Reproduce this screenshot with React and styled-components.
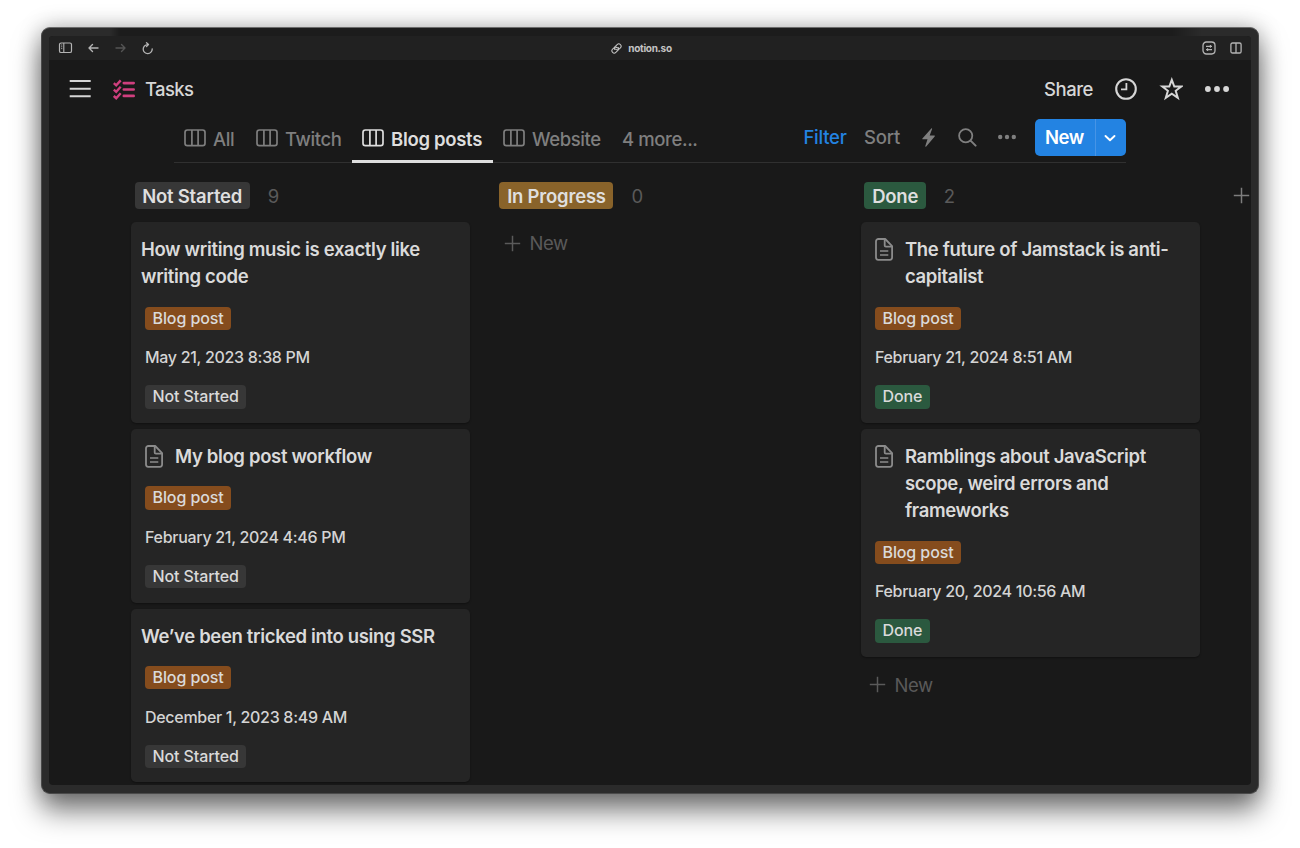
import styled, { createGlobalStyle, css } from 'styled-components'

const GlobalStyle = createGlobalStyle`
	* {
		box-sizing: border-box;
	}

	body {
		margin: 0;
		background: #fff;
		font-family: Inter, 'Liberation Sans', sans-serif;
		color: #d6d6d6;
		overflow: hidden;
	}
`

const Page = styled.div`
	width: 1300px;
	height: 848px;
	padding: 27px 41px 54px;
	overflow: hidden;
`

const Window = styled.div`
	height: 767px;
	border: 1px solid #4a4a4a;
	border-top-color: #6b6b6b;
	border-radius: 9px;
	padding: 8px 7px;
	background: linear-gradient(90deg, #2b2b2b 68px, #1c1c1c 78px, #1c1c1c 1130px, #2b2b2b 1160px)
			top / 100% 10px no-repeat,
		#2b2b2b;
	box-shadow: 0 17px 28px rgba(0, 0, 0, 0.5), 0 0 22px rgba(0, 0, 0, 0.28);
`

const Screen = styled.div`
	height: 749px;
	border-radius: 4px;
	background: #191919;
	overflow: hidden;
`

const BrowserBar = styled.div`
	height: 24px;
	padding: 0 9.5px 0 8.5px;
	display: grid;
	grid-template-columns: 1fr auto 1fr;
	align-items: center;
	background: #212121;
	color: #b4b4b4;

	svg {
		display: block;
	}
`

const BarSide = styled.div`
	display: flex;
	align-items: center;
	justify-content: ${({ $end }) => ($end ? 'flex-end' : 'flex-start')};
	gap: 14px;
`

const Address = styled.div`
	display: flex;
	align-items: center;
	gap: 6px;
	margin-right: 16px;
	color: #c4c4c4;
	font-size: 10px;
	font-weight: 700;
	letter-spacing: -0.3px;
`

const Header = styled.header`
	height: 58px;
	padding: 0 22px 0 20px;
	display: flex;
	align-items: center;
	font-size: 18.5px;
	font-weight: 500;

	svg {
		display: block;
	}
`

const Title = styled.div`
	margin: 0 auto 0 22px;
	display: flex;
	align-items: center;
	gap: 10px;
	letter-spacing: -0.65px;
`

const HeaderActions = styled.div`
	display: flex;
	align-items: center;
	gap: 22px;
	letter-spacing: -0.45px;
`

const Toolbar = styled.div`
	height: 45px;
	margin: 0 125px;
	display: flex;
	justify-content: space-between;
	border-bottom: 1px solid #303030;
	font-size: 18.5px;
	font-weight: 500;
	color: #7f7f7f;
`

const Tabs = styled.nav`
	display: grid;
	grid-template-columns: 72px 106px 141px 119px auto;
`

const Tab = styled.div`
	height: 45px;
	padding: 0 0 3px 10px;
	display: flex;
	align-items: center;
	gap: 7px;
	white-space: nowrap;
	letter-spacing: -0.4px;
	border-bottom: 3px solid transparent;

	span {
		padding-top: 2px;
	}

	${({ $active }) =>
		$active &&
		css`
			color: #dedede;
			font-weight: 600;
			letter-spacing: -0.3px;
			border-bottom-color: #dedede;
		`}
`

const Tools = styled.div`
	height: 37px;
	margin-top: 1px;
	display: flex;
	align-items: center;
	letter-spacing: -0.25px;

	svg {
		display: block;
	}
`

const Tool = styled.span`
	margin-right: ${({ $gap }) => $gap}px;
	padding-bottom: 1px;
	color: ${({ $accent }) => ($accent ? '#2383e2' : 'inherit')};
`

const NewButton = styled.div`
	width: 91px;
	height: 37px;
	display: grid;
	grid-template-columns: 60px 1fr;
	border-radius: 5px;
	background: #2383e2;
	color: #fff;
	font-weight: 600;
	letter-spacing: -0.4px;

	> * {
		display: flex;
		align-items: center;
		justify-content: center;
		padding: 0 1px 1px 0;
	}

	> :last-child {
		padding: 1px 2px 0 0;
		border-left: 1px solid #4694e6;
	}
`

const Board = styled.main`
	padding: 19.4px 0 0 82px;
	display: flex;
	gap: 26.3px;
`

const Column = styled.section`
	width: 338.7px;
	flex: none;
`

const ColumnHeader = styled.div`
	height: 40px;
	padding-left: 3.5px;
	display: flex;
	align-items: flex-start;
	font-size: 18.5px;
`

const tones = {
	gray: '#373737',
	yellow: '#89632a',
	green: '#2b593f',
	orange: '#854c1d',
}

const StatusTag = styled.span`
	height: 27px;
	padding: 0 7.7px;
	border-radius: 4px;
	line-height: 28px;
	font-weight: 600;
	letter-spacing: -0.22px;
	color: #dfdfdf;
	background: ${({ $tone }) => tones[$tone]};
`

const Count = styled.span`
	margin-left: 18px;
	line-height: 29px;
	color: #5a5a5a;
`

const AddColumn = styled.div`
	margin: 5px 0 0 7px;
	color: #7d7d7d;

	svg {
		display: block;
	}
`

const Cards = styled.div`
	display: flex;
	flex-direction: column;
	gap: 6.5px;
`

const CardBox = styled.article`
	padding: 13.4px 14px 6.4px;
	border-radius: 5px;
	background: #252525;
	box-shadow: 0 1px 2px rgba(0, 0, 0, 0.35);
`

const CardTitle = styled.h3`
	margin: 0 0 8.4px ${({ $page }) => ($page ? 0 : -4)}px;
	display: flex;
	gap: 12px;
	font-size: 18.5px;
	font-weight: 580;
	line-height: 27.2px;
	letter-spacing: -0.34px;
	color: #dadada;

	svg {
		flex: none;
		margin-top: 2px;
	}
`

const Property = styled.div`
	height: 39.3px;
	display: flex;
	align-items: center;
	font-size: 16px;
	font-weight: 480;
	letter-spacing: -0.3px;
	color: #d4d4d4;
`

const DateText = styled.span`
	padding-bottom: 1px;
`

const Tag = styled.span`
	height: 23.4px;
	padding: 0 7.5px;
	border-radius: 4px;
	line-height: 23.4px;
	font-weight: 500;
	letter-spacing: -0.1px;
	color: #dadada;
	background: ${({ $tone }) => tones[$tone]};
`

const AddCard = styled.div`
	height: 42px;
	padding-left: 8px;
	display: flex;
	align-items: center;
	gap: 8.5px;
	font-size: 18.5px;
	letter-spacing: -0.4px;
	color: #5a5a5a;
`

const SidebarIcon = () => (
	<svg width='15' height='12' viewBox='0 0 15 12' fill='none' stroke='currentColor'>
		<rect x='1.5' y='1' width='12' height='9.5' rx='1.6' strokeWidth='1.2' />
		<path d='M5.8 1v9.5' strokeWidth='1.1' />
		<path d='M3 3h1.3M3 4.8h1.3M3 6.6h1.3' strokeWidth='.8' />
	</svg>
)

const ArrowIcon = ({ forward }) => (
	<svg
		width='13'
		height='12'
		viewBox='0 0 13 12'
		fill='none'
		stroke={forward ? '#545454' : 'currentColor'}
		strokeWidth='1.4'
		strokeLinecap='round'
		strokeLinejoin='round'
	>
		<path d={forward ? 'M2 6h9M7.5 2.5 11 6 7.5 9.5' : 'M11 6H2M5.5 2.5 2 6l3.5 3.5'} />
	</svg>
)

const ReloadIcon = () => (
	<svg width='13' height='13' viewBox='0 0 13 13' fill='none' stroke='currentColor' strokeWidth='1.3' strokeLinecap='round' strokeLinejoin='round'>
		<path d='M11.2 6.9a4.5 4.5 0 1 1-4.5-4.3M5.5.8l2 1.8-2 2' />
	</svg>
)

const LinkIcon = () => (
	<svg width='11' height='11' viewBox='0 0 24 24' fill='none' stroke='currentColor' strokeWidth='2.3' strokeLinecap='round'>
		<path d='M10 13a5 5 0 0 0 7.54.54l3-3a5 5 0 0 0-7.07-7.07l-4.5 4.5a5 5 0 0 0-.7 6.2' />
		<path d='M14 11a5 5 0 0 0-7.54-.54l-3 3a5 5 0 0 0 7.07 7.07l4.5-4.5a5 5 0 0 0 .7-6.2' />
	</svg>
)

const ReaderIcon = () => (
	<svg width='14' height='14' viewBox='0 0 14 14' fill='none' stroke='currentColor'>
		<rect x='1' y='1' width='12' height='12' rx='3.4' strokeWidth='1.3' />
		<path d='M4 5.4h6M4 8.6h6M8.4 4v2.8M5.6 7.2V10' strokeWidth='1.1' />
	</svg>
)

const SplitIcon = () => (
	<svg width='12' height='12' viewBox='0 0 12 12' fill='none' stroke='currentColor' strokeWidth='1.3'>
		<rect x='.9' y='1' width='10.2' height='10' rx='1.6' />
		<path d='M6 1v10' />
	</svg>
)

const MenuIcon = () => (
	<svg width='22' height='20' viewBox='0 0 22 20' fill='none' stroke='currentColor' strokeWidth='2'>
		<path d='M.7 2.1h21M.7 9.7h21M.7 17.3h21' />
	</svg>
)

const ChecklistIcon = () => (
	<svg width='22' height='21' viewBox='0 0 22 21' fill='none' stroke='#cf3f7e'>
		<path d='M.8 4.2l2.4 2.2 4.5-5M.8 10.6l2.4 2.2 4.5-5M.8 17l2.4 2.2 4.5-5' strokeWidth='2.4' />
		<path d='M10.8 4.1h9.9M10.8 10.5h9.9M10.8 16.9h9.9' strokeWidth='2.6' strokeLinecap='round' />
	</svg>
)

const ClockIcon = () => (
	<svg width='22' height='22' viewBox='0 0 22 22' fill='none' stroke='currentColor'>
		<circle cx='11' cy='11' r='9.8' strokeWidth='2.1' />
		<path d='M11.4 5v6.4H6' strokeWidth='1.8' />
	</svg>
)

const StarIcon = () => (
	<svg width='24' height='24' viewBox='0 0 24 24' fill='none' stroke='currentColor' strokeWidth='2' strokeLinejoin='miter'>
		<path d='M12.8 2.8 15.3 9.5h7l-5.6 4.3 2.1 7-6-4.1-6 4.1 2.1-7-5.6-4.3h7z' />
	</svg>
)

const DotsIcon = ({ width, r }) => (
	<svg width={width} height='8' viewBox={`0 0 ${width} 8`} fill='currentColor'>
		<circle cx={r} cy='4' r={r} />
		<circle cx={width / 2} cy='4' r={r} />
		<circle cx={width - r} cy='4' r={r} />
	</svg>
)

const BoardIcon = () => (
	<svg width='22' height='18' viewBox='0 0 22 18' fill='none' stroke='currentColor' strokeWidth='1.7'>
		<rect x='1' y='1' width='20' height='15.6' rx='2.4' />
		<path d='M7.9 1v15.6M14.1 1v15.6' />
	</svg>
)

const BoltIcon = () => (
	<svg width='13' height='19' viewBox='0 0 13 19' fill='currentColor'>
		<path d='M9.3.4.4 10.5c-.3.4-.1.8.4.8h4.7L3.3 18c-.2.6.4 1 .9.5l8.5-10.1c.3-.4.1-.8-.4-.8H7.7L10.1.9c.2-.6-.4-.9-.8-.5z' />
	</svg>
)

const SearchIcon = () => (
	<svg width='19' height='19' viewBox='0 0 19 19' fill='none' stroke='currentColor' strokeWidth='1.8' strokeLinecap='round'>
		<circle cx='7.7' cy='7.7' r='6.6' />
		<path d='m12.6 12.6 5 5' strokeWidth='2' />
	</svg>
)

const ChevronIcon = () => (
	<svg width='12' height='8' viewBox='0 0 12 8' fill='none' stroke='currentColor' strokeWidth='1.9' strokeLinecap='round' strokeLinejoin='round'>
		<path d='m1.5 2 4.5 4.3L10.500 2' />
	</svg>
)

const PlusIcon = () => (
	<svg width='17' height='17' viewBox='0 0 17 17' fill='none' stroke='currentColor' strokeWidth='1.5'>
		<path d='M8.5.8v15.4M.8 8.500h15.4' />
	</svg>
)

const PageIcon = () => (
	<svg width='18' height='23' viewBox='0 0 18 23' fill='none' stroke='#8b8b8b' strokeWidth='1.8' strokeLinejoin='round'>
		<path d='M3.5 1h6.7l6.9 7.1v11.5a2.2 2.2 0 0 1-2.2 2.2H3.200A2.200 2.200 0 0 1 1 19.600V3.400A2.400 2.400 0 0 1 3.500 1z' />
		<path d='M9.7 1.2v6.2c0 .8.4 1.2 1.2 1.2h6' />
		<path d='M5 13h8.3M5 16.9h8.3' strokeWidth='1.5' />
	</svg>
)

const tabs = ['All', 'Twitch', 'Blog posts', 'Website']

const columns = [
	{
		status: 'Not Started',
		tone: 'gray',
		count: 9,
		cards: [
			{ title: 'How writing music is exactly like writing code', date: 'May 21, 2023 8:38 PM' },
			{ title: 'My blog post workflow', date: 'February 21, 2024 4:46 PM', page: true },
			{ title: 'We’ve been tricked into using SSR', date: 'December 1, 2023 8:49 AM' },
		],
	},
	{ status: 'In Progress', tone: 'yellow', count: 0, cards: [] },
	{
		status: 'Done',
		tone: 'green',
		count: 2,
		cards: [
			{ title: 'The future of Jamstack is anti-capitalist', date: 'February 21, 2024 8:51 AM', page: true },
			{
				title: 'Ramblings about JavaScript scope, weird errors and frameworks',
				date: 'February 20, 2024 10:56 AM',
				page: true,
			},
		],
	},
]

const Card = ({ title, date, page, status, tone }) => (
	<CardBox>
		<CardTitle $page={page}>
			{page && <PageIcon />}
			<span>{title}</span>
		</CardTitle>
		<Property>
			<Tag $tone='orange'>Blog post</Tag>
		</Property>
		<Property>
			<DateText>{date}</DateText>
		</Property>
		<Property>
			<Tag $tone={tone}>{status}</Tag>
		</Property>
	</CardBox>
)

export default function App() {
	return (
		<Page>
			<GlobalStyle />
			<Window>
				<Screen>
					<BrowserBar>
						<BarSide>
							<SidebarIcon />
							<ArrowIcon />
							<ArrowIcon forward />
							<ReloadIcon />
						</BarSide>
						<Address>
							<LinkIcon />
							notion.so
						</Address>
						<BarSide $end>
							<ReaderIcon />
							<SplitIcon />
						</BarSide>
					</BrowserBar>
					<Header>
						<MenuIcon />
						<Title>
							<ChecklistIcon />
							Tasks
						</Title>
						<HeaderActions>
							<span>Share</span>
							<ClockIcon />
							<StarIcon />
							<DotsIcon width={24} r={2.9} />
						</HeaderActions>
					</Header>
					<Toolbar>
						<Tabs>
							{tabs.map(name => (
								<Tab key={name} $active={name === 'Blog posts'}>
									<BoardIcon />
									<span>{name}</span>
								</Tab>
							))}
							<Tab>
								<span>4 more...</span>
							</Tab>
						</Tabs>
						<Tools>
							<Tool $accent $gap={17.5}>
								Filter
							</Tool>
							<Tool $gap={22}>Sort</Tool>
							<Tool $gap={23}>
								<BoltIcon />
							</Tool>
							<Tool $gap={20.5}>
								<SearchIcon />
							</Tool>
							<Tool $gap={19.5}>
								<DotsIcon width={18} r={2.2} />
							</Tool>
							<NewButton>
								<span>New</span>
								<span>
									<ChevronIcon />
								</span>
							</NewButton>
						</Tools>
					</Toolbar>
					<Board>
						{columns.map(({ status, tone, count, cards }) => (
							<Column key={status}>
								<ColumnHeader>
									<StatusTag $tone={tone}>{status}</StatusTag>
									<Count>{count}</Count>
								</ColumnHeader>
								<Cards>
									{cards.map(card => (
										<Card key={card.title} {...card} status={status} tone={tone} />
									))}
									{cards.length === count && (
										<AddCard>
											<PlusIcon />
											New
										</AddCard>
									)}
								</Cards>
							</Column>
						))}
						<AddColumn>
							<PlusIcon />
						</AddColumn>
					</Board>
				</Screen>
			</Window>
		</Page>
	)
}
